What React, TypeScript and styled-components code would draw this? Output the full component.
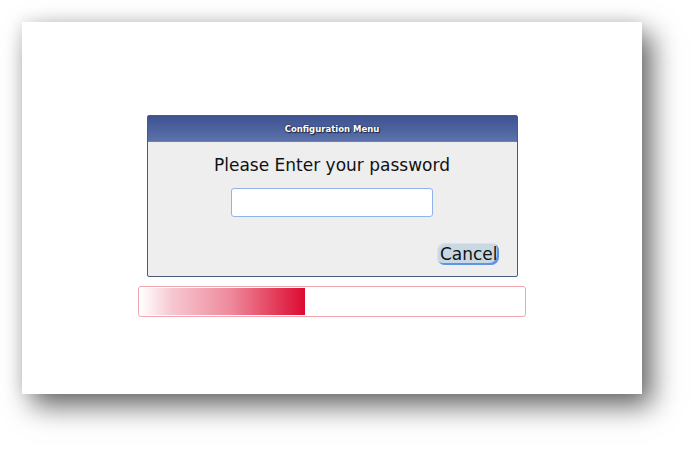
import styled, { createGlobalStyle } from 'styled-components'

const GlobalStyle = createGlobalStyle`
  html, body {
    margin: 0;
    padding: 0;
    background: #ffffff;
    font-family: "DejaVu Sans", Verdana, sans-serif;
  }
`

const Stage = styled.div`
  width: 697px;
  height: 449px;
  padding: 22px 0 0 22px;
  box-sizing: border-box;
`

const Screen = styled.div`
  width: 620px;
  height: 372px;
  background: #ffffff;
  box-shadow: 10px 12px 26px rgba(0, 0, 0, 0.6), -2px -2px 14px rgba(0, 0, 0, 0.08);
  display: flex;
  flex-direction: column;
  align-items: center;
  padding-top: 93px;
  box-sizing: border-box;
`

const Dialog = styled.div`
  width: 371px;
  height: 162px;
  box-sizing: border-box;
  border: 1px solid #4a5a78;
  border-radius: 2px;
  background: #eeeeee;
  display: flex;
  flex-direction: column;
`

const TitleBar = styled.div`
  height: 25px;
  background: linear-gradient(#3d5290, #5c72aa);
  border-bottom: 1px solid #6b7fb3;
  color: #ffffff;
  font-weight: bold;
  font-size: 8.5px;
  display: flex;
  align-items: center;
  justify-content: center;
  text-shadow: 0 0 2px #1c2440, 1px 1px 1px #1c2440;
`

const Body = styled.div`
  flex: 1;
  display: flex;
  flex-direction: column;
  align-items: center;
  padding-top: 12px;
`

const Prompt = styled.div`
  font-size: 17px;
  color: #111111;
  line-height: 22px;
`

const Field = styled.input`
  margin-top: 12px;
  width: 202px;
  height: 29px;
  box-sizing: border-box;
  border: 1px solid #90b4ea;
  border-radius: 3px;
  background: #ffffff;
  outline: none;
`

const Actions = styled.div`
  align-self: stretch;
  display: flex;
  justify-content: flex-end;
  padding: 26px 18px 0 0;
`

const Button = styled.button`
  height: 22px;
  padding: 0 1px 0 3px;
  font-family: "DejaVu Sans", Verdana, sans-serif;
  font-size: 17px;
  line-height: 20px;
  color: #111111;
  background: #c9d9e3;
  border: none;
  border-radius: 8px;
  box-shadow: inset -2px -2px 0 #5f93e6, inset 1px 1px 0 #d6e4f0;
`

const Progress = styled.div`
  margin-top: 9px;
  width: 388px;
  height: 31px;
  box-sizing: border-box;
  border: 1px solid #f2a6b0;
  border-radius: 3px;
  padding: 1px;
  background: #ffffff;
`

const Fill = styled.div`
  height: 100%;
  background: linear-gradient(to right, #ffffff, #f6c6d0 20%, #ee8a9c 55%, #dc0a30);
`

export default function App() {
  const percent = 43
  return (
    <Stage>
      <GlobalStyle />
      <Screen>
        <Dialog>
          <TitleBar>Configuration Menu</TitleBar>
          <Body>
            <Prompt>Please Enter your password</Prompt>
            <Field type="password" />
            <Actions>
              <Button>Cancel</Button>
            </Actions>
          </Body>
        </Dialog>
        <Progress>
          <Fill style={{ width: `${percent}%` }} />
        </Progress>
      </Screen>
    </Stage>
  )
}
